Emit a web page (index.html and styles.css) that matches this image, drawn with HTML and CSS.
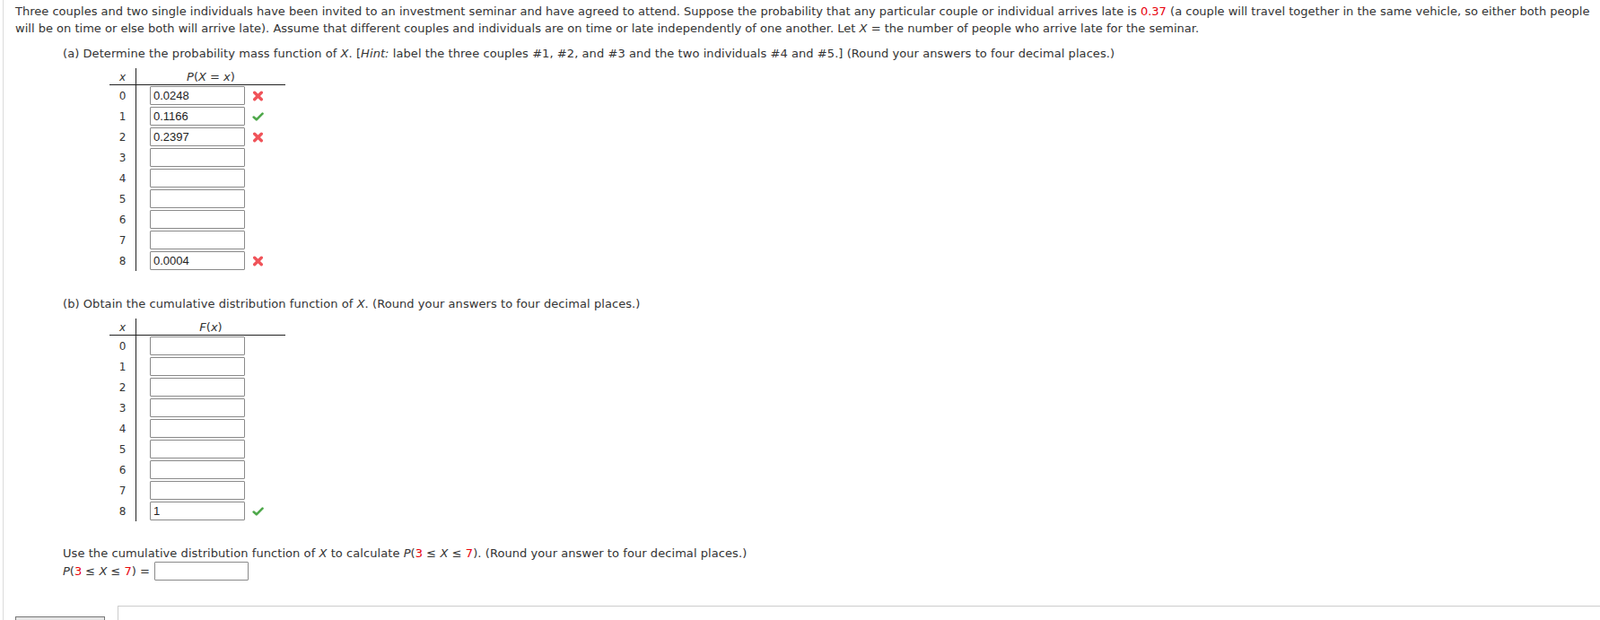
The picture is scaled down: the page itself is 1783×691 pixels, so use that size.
FILE: index.html
```html
<!DOCTYPE html>
<html lang="en">
<head>
<meta charset="utf-8">
<title>Probability question</title>
<link rel="stylesheet" href="styles.css">
</head>
<body>
<div class="page">
  <p class="intro">Three couples and two single individuals have been invited to an investment seminar and have agreed to attend. Suppose the probability that any particular couple or individual arrives late is <span class="red">0.37</span> (a couple will travel together in the same vehicle, so either both people will be on time or else both will arrive late). Assume that different couples and individuals are on time or late independently of one another. Let <i>X</i> = the number of people who arrive late for the seminar.</p>

  <div class="part">
    <p class="q">(a) Determine the probability mass function of <i>X</i>. [<i>Hint:</i> label the three couples #1, #2, and #3 and the two individuals #4 and #5.] (Round your answers to four decimal places.)</p>
    <table class="dist">
      <thead>
        <tr><th class="xcol"><i>x</i></th><th class="vhead" colspan="2"><i>P</i>(<i>X</i> = <i>x</i>)</th></tr>
      </thead>
      <tbody>
        <tr><td class="xcol">0</td><td class="icell"><input class="ans" type="text" value="0.0248"></td><td class="mark"><svg class="icon" viewBox="0 0 12 12"><path class="wrong" d="M2.2 2.2 L9.8 9.8 M9.8 2.2 L2.2 9.8"/></svg></td></tr>
        <tr><td class="xcol">1</td><td class="icell"><input class="ans" type="text" value="0.1166"></td><td class="mark"><svg class="icon" viewBox="0 0 14 12"><path class="right" d="M1.8 6.6 L5.2 9.6 L12.4 2.4"/></svg></td></tr>
        <tr><td class="xcol">2</td><td class="icell"><input class="ans" type="text" value="0.2397"></td><td class="mark"><svg class="icon" viewBox="0 0 12 12"><path class="wrong" d="M2.2 2.2 L9.8 9.8 M9.8 2.2 L2.2 9.8"/></svg></td></tr>
        <tr><td class="xcol">3</td><td class="icell"><input class="ans" type="text"></td><td class="mark"></td></tr>
        <tr><td class="xcol">4</td><td class="icell"><input class="ans" type="text"></td><td class="mark"></td></tr>
        <tr><td class="xcol">5</td><td class="icell"><input class="ans" type="text"></td><td class="mark"></td></tr>
        <tr><td class="xcol">6</td><td class="icell"><input class="ans" type="text"></td><td class="mark"></td></tr>
        <tr><td class="xcol">7</td><td class="icell"><input class="ans" type="text"></td><td class="mark"></td></tr>
        <tr><td class="xcol">8</td><td class="icell"><input class="ans" type="text" value="0.0004"></td><td class="mark"><svg class="icon" viewBox="0 0 12 12"><path class="wrong" d="M2.2 2.2 L9.8 9.8 M9.8 2.2 L2.2 9.8"/></svg></td></tr>
      </tbody>
    </table>
  </div>

  <div class="part partb">
    <p class="q">(b) Obtain the cumulative distribution function of <i>X</i>. (Round your answers to four decimal places.)</p>
    <table class="dist">
      <thead>
        <tr><th class="xcol"><i>x</i></th><th class="vhead" colspan="2"><i>F</i>(<i>x</i>)</th></tr>
      </thead>
      <tbody>
        <tr><td class="xcol">0</td><td class="icell"><input class="ans" type="text"></td><td class="mark"></td></tr>
        <tr><td class="xcol">1</td><td class="icell"><input class="ans" type="text"></td><td class="mark"></td></tr>
        <tr><td class="xcol">2</td><td class="icell"><input class="ans" type="text"></td><td class="mark"></td></tr>
        <tr><td class="xcol">3</td><td class="icell"><input class="ans" type="text"></td><td class="mark"></td></tr>
        <tr><td class="xcol">4</td><td class="icell"><input class="ans" type="text"></td><td class="mark"></td></tr>
        <tr><td class="xcol">5</td><td class="icell"><input class="ans" type="text"></td><td class="mark"></td></tr>
        <tr><td class="xcol">6</td><td class="icell"><input class="ans" type="text"></td><td class="mark"></td></tr>
        <tr><td class="xcol">7</td><td class="icell"><input class="ans" type="text"></td><td class="mark"></td></tr>
        <tr><td class="xcol">8</td><td class="icell"><input class="ans" type="text" value="1"></td><td class="mark"><svg class="icon" viewBox="0 0 14 12"><path class="right" d="M1.8 6.6 L5.2 9.6 L12.4 2.4"/></svg></td></tr>
      </tbody>
    </table>

    <p class="q use">Use the cumulative distribution function of <i>X</i> to calculate <i>P</i>(<span class="red">3</span> &le; <i>X</i> &le; <span class="red">7</span>). (Round your answer to four decimal places.)</p>
    <div class="final"><span><i>P</i>(<span class="red">3</span> &le; <i>X</i> &le; <span class="red">7</span>) =</span><input class="ans wide" type="text"></div>
  </div>

  <div class="bottom">
    <div class="btn"></div>
    <div class="panel"></div>
  </div>
</div>
</body>
</html>
```
FILE: styles.css
```css
html, body {
  margin: 0;
  padding: 0;
  background: #ffffff;
  overflow: hidden;
}
body {
  font-family: "DejaVu Sans", Verdana, sans-serif;
  font-size: 13px;
  color: #333333;
}
.page {
  margin-left: 3px;
  border-left: 1px solid #dcdcdc;
  padding: 3px 0 0 13px;
  min-height: 720px;
}
p {
  margin: 0;
}
.intro {
  line-height: 19px;
  letter-spacing: 0.01px;
}
.red {
  color: #e8000b;
}
.part {
  padding-left: 53px;
}
.q {
  line-height: 19px;
  margin-top: 9px;
  letter-spacing: 0.07px;
}
.dist {
  border-collapse: collapse;
  margin: 7px 0 0 52px;
  font-size: 12px;
}
.dist th {
  font-weight: normal;
  font-size: 13px;
  height: 18px;
  padding: 0;
  border-bottom: 1px solid #222;
  line-height: 16px;
  vertical-align: bottom;
}
.dist td {
  padding: 0;
  height: 23px;
}
.xcol {
  width: 29px;
  text-align: center;
  border-right: 1px solid #222;
}
.dist th.xcol {
  font-size: 12px;
}
.vhead {
  text-align: center;
}
.icell {
  padding: 0 4px 0 15px !important;
  width: 106px;
}
.mark {
  width: 41px;
}
.ans {
  display: block;
  box-sizing: border-box;
  width: 106px;
  height: 21px;
  margin: 0;
  border: 1px solid #8a8a8a;
  border-radius: 1px;
  padding: 0 3px;
  font-family: "Liberation Sans", Arial, sans-serif;
  font-size: 13px;
  color: #222;
  background: #fff;
}
.icon {
  display: block;
  width: 13px;
  height: 12px;
  margin-left: 4px;
}
.wrong {
  fill: none;
  stroke: #f0545a;
  stroke-width: 3.4;
  stroke-linecap: round;
}
.right {
  fill: none;
  stroke: #4ea84a;
  stroke-width: 2.8;
  stroke-linecap: round;
  stroke-linejoin: round;
}
.partb {
  margin-top: 27px;
}
.partb > .q:first-child {
  margin-top: 0;
}
.use {
  margin-top: 26px;
}
.final {
  display: flex;
  align-items: center;
  gap: 5px;
  height: 21px;
  margin-top: 0;
}
.ans.wide {
  width: 105px;
}
.bottom {
  display: flex;
  align-items: flex-start;
  gap: 14px;
  margin-top: 28px;
  margin-right: -10px;
}
.btn {
  width: 100px;
  height: 30px;
  margin-top: 12px;
  box-sizing: border-box;
  border: 1px solid #777;
  background: #e6e6e6;
}
.panel {
  flex: 1;
  height: 60px;
  border: 1px solid #cccccc;
}
```
